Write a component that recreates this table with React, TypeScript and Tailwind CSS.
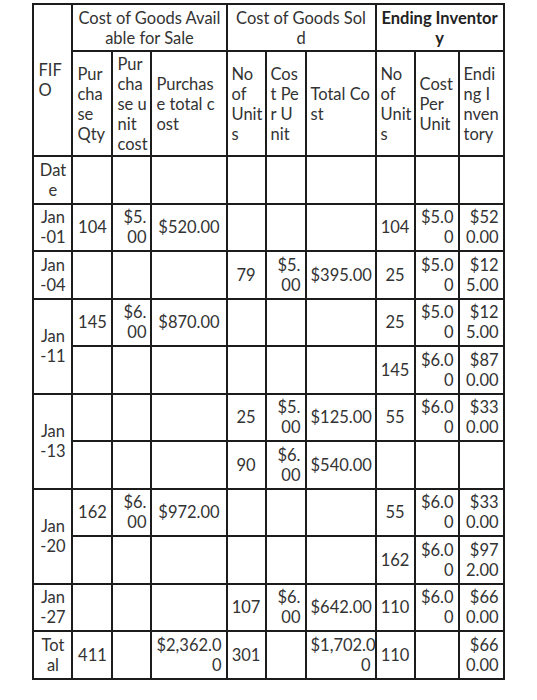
import React from "react"

type Cell = {
  lines?: string[]
  rowSpan?: number
}

const cols = [39, 40, 39, 75, 39, 40, 70, 39, 44, 45]

const c = (...lines: string[]): Cell => ({ lines })
const e: Cell = {}

// data rows, first column is given separately since it spans
const rows: { date?: Cell; cells: Cell[] }[] = [
  { date: { lines: ["Dat", "e"] }, cells: [e, e, e, e, e, e, e, e, e] },
  {
    date: { lines: ["Jan", "-01"] },
    cells: [c("104"), c("$5.", "00"), c("$520.00"), e, e, e, c("104"), c("$5.0", "0"), c("$52", "0.00")],
  },
  {
    date: { lines: ["Jan", "-04"] },
    cells: [e, e, e, c("79"), c("$5.", "00"), c("$395.00"), c("25"), c("$5.0", "0"), c("$12", "5.00")],
  },
  {
    date: { lines: ["Jan", "-11"], rowSpan: 2 },
    cells: [c("145"), c("$6.", "00"), c("$870.00"), e, e, e, c("25"), c("$5.0", "0"), c("$12", "5.00")],
  },
  { cells: [e, e, e, e, e, e, c("145"), c("$6.0", "0"), c("$87", "0.00")] },
  {
    date: { lines: ["Jan", "-13"], rowSpan: 2 },
    cells: [e, e, e, c("25"), c("$5.", "00"), c("$125.00"), c("55"), c("$6.0", "0"), c("$33", "0.00")],
  },
  { cells: [e, e, e, c("90"), c("$6.", "00"), c("$540.00"), e, e, e] },
  {
    date: { lines: ["Jan", "-20"], rowSpan: 2 },
    cells: [c("162"), c("$6.", "00"), c("$972.00"), e, e, e, c("55"), c("$6.0", "0"), c("$33", "0.00")],
  },
  { cells: [e, e, e, e, e, e, c("162"), c("$6.0", "0"), c("$97", "2.00")] },
  {
    date: { lines: ["Jan", "-27"] },
    cells: [e, e, e, c("107"), c("$6.", "00"), c("$642.00"), c("110"), c("$6.0", "0"), c("$66", "0.00")],
  },
  {
    date: { lines: ["Tot", "al"] },
    cells: [c("411"), e, c("$2,362.0", "0"), c("301"), e, c("$1,702.0", "0"), c("110"), e, c("$66", "0.00")],
  },
]

const subHeaders = [
  ["Pur", "cha", "se", "Qty"],
  ["Pur", "cha", "se u", "nit", "cost"],
  ["Purchas", "e total c", "ost"],
  ["No", "of", "Unit", "s"],
  ["Cos", "t Pe", "r U", "nit"],
  ["Total Co", "st"],
  ["No", "of", "Unit", "s"],
  ["Cost", "Per", "Unit"],
  ["Endi", "ng I", "nven", "tory"],
]

const Lines = ({ lines }: { lines: string[] }) => (
  <>
    {lines.map((l, i) => (
      <span key={i} className="block whitespace-nowrap">
        {l}
      </span>
    ))}
  </>
)

const td = "border-2 border-[#1c1c1c] px-[4px] py-0 align-middle"

export default function App() {
  return (
    <div
      className="bg-white min-h-[700px] pt-[3px] text-[#333] text-[16.5px] leading-[20px]"
      style={{ fontFamily: "Lato, 'Open Sans', sans-serif" }}
    >
      <table className="mx-auto w-[470px] table-fixed border-collapse border-2 border-[#1c1c1c]">
        <colgroup>
          {cols.map((w, i) => (
            <col key={i} style={{ width: w }} />
          ))}
        </colgroup>
        <tbody>
          <tr className="h-[47px]">
            <td rowSpan={2} className={`${td} text-left`}>
              <Lines lines={["FIF", "O"]} />
            </td>
            <td colSpan={3} className={`${td} text-center`}>
              <Lines lines={["Cost of Goods Avail", "able for Sale"]} />
            </td>
            <td colSpan={3} className={`${td} text-center`}>
              <Lines lines={["Cost of Goods Sol", "d"]} />
            </td>
            <td colSpan={3} className={`${td} text-center font-bold text-[#222]`}>
              <Lines lines={["Ending Inventor", "y"]} />
            </td>
          </tr>
          <tr className="h-[105px]">
            {subHeaders.map((h, i) => (
              <td key={i} className={`${td} text-left`}>
                <Lines lines={h} />
              </td>
            ))}
          </tr>
          {rows.map((r, i) => (
            <tr key={i} className="h-[47.5px]">
              {r.date && (
                <td rowSpan={r.date.rowSpan} className={`${td} text-center`}>
                  <Lines lines={r.date.lines || []} />
                </td>
              )}
              {r.cells.map((cell, j) => (
                <td
                  key={j}
                  className={`${td} ${cell.lines && cell.lines.length > 1 ? "text-right" : "text-center"}`}
                >
                  {cell.lines && <Lines lines={cell.lines} />}
                </td>
              ))}
            </tr>
          ))}
        </tbody>
      </table>
    </div>
  )
}
